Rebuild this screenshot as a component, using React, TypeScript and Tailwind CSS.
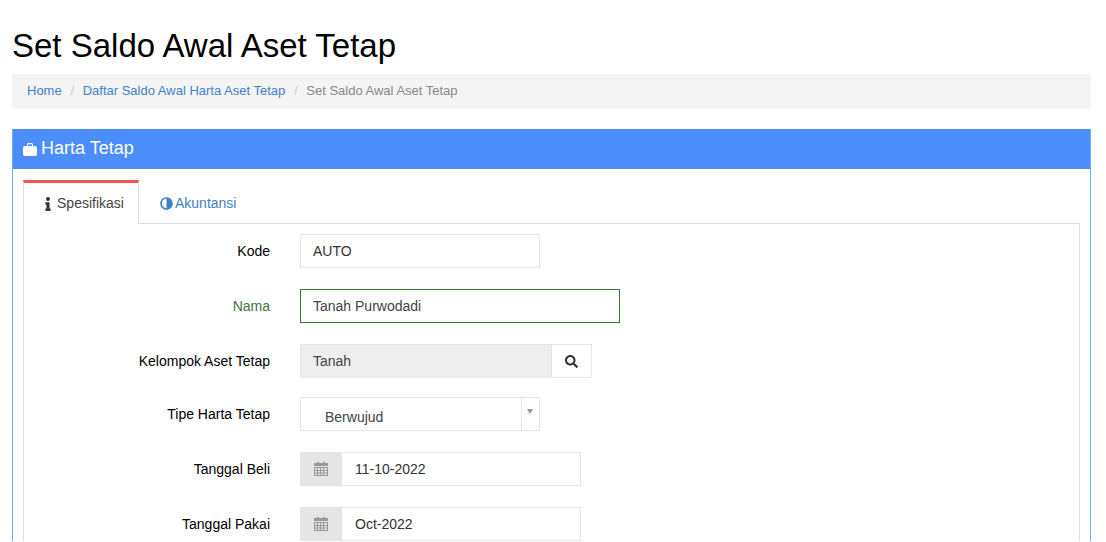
import { FaAdjust, FaInfo, FaSearch } from "react-icons/fa";

function Row({ label, labelClass = "text-black", mb = "mb-[21px]", children }: { label: string; labelClass?: string; mb?: string; children: React.ReactNode }) {
  return (
    <div className={`flex h-[34px] ${mb}`}>
      <div className={`w-[246px] pt-[7px] text-right text-[14px] leading-[20px] ${labelClass}`}>{label}</div>
      <div className="ml-[30px]">{children}</div>
    </div>
  );
}

function CalendarIcon() {
  return (
    <svg width="14" height="14" viewBox="0 0 14 14" fill="#999999">
      <rect x="3" y="0" width="2" height="3" />
      <rect x="9" y="0" width="2" height="3" />
      <rect x="0" y="1" width="14" height="3" />
      <path fillRule="evenodd" d="M0 5h14v9H0z M1 6v2h2V6z M4 6v2h2V6z M7 6v2h2V6z M10 6v2h3V6z M1 9v1.500h2V9z M4 9v1.500h2V9z M7 9v1.500h2V9z M10 9v1.500h3V9z M1 11.500V13h2v-1.500z M4 11.500V13h2v-1.500z M7 11.500V13h2v-1.500z M10 11.500V13h3v-1.500z" />
    </svg>
  );
}

function SuitcaseIcon() {
  return (
    <svg width="14" height="13" viewBox="0 0 14 13" fill="#ffffff" className="mr-[4px] mt-[2px]">
      <path fillRule="evenodd" d="M4 3V1.500C4 .700 4.700 0 5.500 0h3C9.300 0 10 .700 10 1.500V3h2c1.100 0 2 .900 2 2v6c0 1.100-.900 2-2 2H2c-1.100 0-2-.900-2-2V5c0-1.100.900-2 2-2z M5 3h4V1.200H5z" />
    </svg>
  );
}

function DateField({ value }: { value: string }) {
  return (
    <div className="flex h-[34px] w-[281px] border border-[#e5e5e5]">
      <div className="-my-px -ml-px flex h-[34px] w-[42px] items-center justify-center bg-[#e5e5e5]">
        <CalendarIcon />
      </div>
      <div className="pl-[13px] text-[14px] leading-[32px] text-[#333333]">{value}</div>
    </div>
  );
}

export default function App() {
  return (
    <div className="h-[542px] overflow-hidden bg-white px-[12px] pr-[15px] font-['Liberation_Sans',Arial,sans-serif]">
      <h1 className="pt-[26px] text-[33px] leading-[40px] font-normal text-black">Set Saldo Awal Aset Tetap</h1>

      <div className="mt-[8px] flex h-[35px] items-center bg-[#f4f4f4] px-[15px] pb-[2px] text-[13px] leading-[20px]">
        <span className="text-[#3f82c4]">Home</span>
        <span className="w-[21px] text-center text-[#cccccc]">/</span>
        <span className="text-[#3f82c4]">Daftar Saldo Awal Harta Aset Tetap</span>
        <span className="w-[21px] text-center text-[#cccccc]">/</span>
        <span className="text-[#888888]">Set Saldo Awal Aset Tetap</span>
      </div>

      <div className="mt-[20px] border-x border-[#6cb0ff]">
        <div className="flex h-[40px] items-center bg-[#4b8dfa] pb-[1px] pl-[10px] text-[18px] text-white">
          <SuitcaseIcon />
          Harta Tetap
        </div>

        <div className="px-[10px] pt-[11px]">
          <div className="flex h-[44px] border-b border-[#dddddd]">
            <div className="flex h-[44px] w-[116px] items-center justify-center border-x border-t-[3px] border-x-[#dddddd] border-t-[#f2545b] bg-white pl-[3px] text-[14px] text-[#444444]">
              <FaInfo className="mr-[2px] text-[14px] text-[#333333]" />
              Spesifikasi
            </div>
            <div className="flex h-[43px] items-center pl-[21px] pt-[3px] text-[14px] text-[#3f82c4]">
              <FaAdjust className="mr-[2px] -scale-x-100 text-[13px]" />
              Akuntansi
            </div>
          </div>

          <div className="border-x border-[#dddddd] pt-[10px]">
            <Row label="Kode">
              <div className="h-[34px] w-[240px] border border-[#e5e5e5] pl-[12px] text-[14px] leading-[32px] text-[#333333]">AUTO</div>
            </Row>
            <Row label="Nama" labelClass="text-[#3c763d]">
              <div className="h-[34px] w-[320px] border border-[#3c763d] pl-[12px] text-[14px] leading-[32px] text-[#444444]">Tanah Purwodadi</div>
            </Row>
            <Row label="Kelompok Aset Tetap" mb="mb-[19px]">
              <div className="flex h-[34px] w-[292px]">
                <div className="h-[34px] w-[252px] border border-[#e5e5e5] bg-[#eeeeee] pl-[12px] text-[14px] leading-[32px] text-[#444444]">Tanah</div>
                <div className="-ml-px flex h-[34px] w-[41px] items-center justify-center border border-[#e5e5e5] text-[#333333]">
                  <FaSearch className="text-[13px]" />
                </div>
              </div>
            </Row>
            <Row label="Tipe Harta Tetap">
              <div className="flex h-[34px] w-[240px] border border-[#e5e5e5]">
                <div className="flex-1 pl-[24px] pt-[2px] text-[14px] leading-[34px] text-[#444444]">Berwujud</div>
                <div className="flex w-[18px] justify-center border-l border-[#e5e5e5] pt-[11px] pr-[2px]">
                  <div className="h-0 w-0 border-x-[3px] border-t-[5px] border-x-transparent border-t-[#999999]" />
                </div>
              </div>
            </Row>
            <Row label="Tanggal Beli">
              <DateField value="11-10-2022" />
            </Row>
            <Row label="Tanggal Pakai">
              <DateField value="Oct-2022" />
            </Row>
          </div>
        </div>
      </div>
    </div>
  );
}
